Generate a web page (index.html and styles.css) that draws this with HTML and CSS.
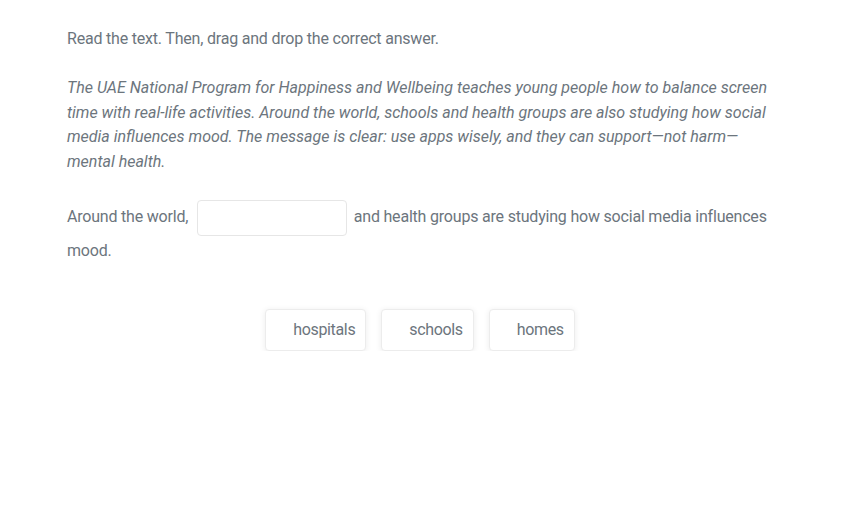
FILE: index.html
```html
<!DOCTYPE html>
<html lang="en">
<head>
<meta charset="utf-8">
<title>Drag and drop</title>
<link rel="stylesheet" href="styles.css">
</head>
<body>
<main class="activity">
  <p class="instructions">Read the text. Then, drag and drop the correct answer.</p>
  <p class="passage">The UAE National Program for Happiness and Wellbeing teaches young people how to balance screen time with real-life activities. Around the world, schools and health groups are also studying how social media influences mood. The message is clear: use apps wisely, and they can support—not harm—mental health.</p>
  <p class="sentence">Around the world, <span class="dropzone"></span> and health groups are studying how social media influences mood.</p>
  <div class="options">
    <div class="chip">hospitals</div>
    <div class="chip">schools</div>
    <div class="chip">homes</div>
  </div>
</main>
</body>
</html>
```

FILE: styles.css
```css
html, body {
  margin: 0;
  background: #ffffff;
}
body {
  font-family: Roboto, "Noto Sans", sans-serif;
  font-size: 16px;
  color: #6c757d;
}
.activity {
  width: 716px;
  padding: 27px 0 0 67px;
}
.instructions {
  margin: 0;
  line-height: 24px;
  letter-spacing: -0.2px;
}
.passage {
  margin: 25px 0 0;
  font-style: italic;
  line-height: 24.5px;
}
.sentence {
  margin: 26px 0 0;
  line-height: 33px;
  letter-spacing: -0.2px;
}
.dropzone {
  display: inline-block;
  vertical-align: middle;
  width: 148px;
  height: 34px;
  border: 1px solid #e6e6e6;
  border-radius: 4px;
  margin: -2px 3px -2px 5px;
}
.options {
  display: flex;
  justify-content: center;
  gap: 15px;
  margin-top: 42px;
  padding-right: 10px;
}
.chip {
  height: 42px;
  box-sizing: border-box;
  display: flex;
  align-items: center;
  padding: 0 10px 0 27px;
  background: #fff;
  border: 1px solid #ececec;
  border-radius: 4px;
  box-shadow: 0 1px 6px rgba(0, 0, 0, 0.08);
  letter-spacing: -0.35px;
}
```
